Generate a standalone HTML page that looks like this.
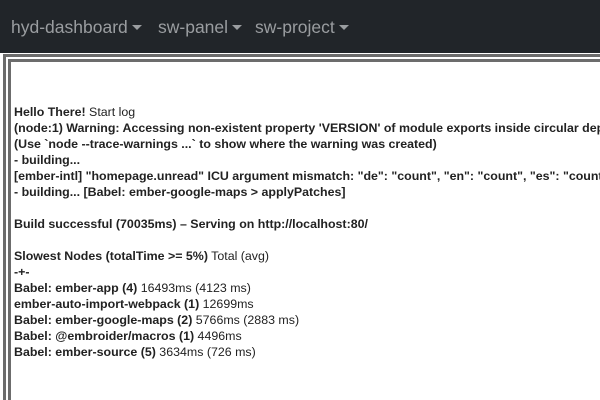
<!DOCTYPE html>
<html><head><style>
html,body{margin:0;padding:0;width:600px;height:400px;overflow:hidden;background:#fff;font-family:"Liberation Sans",sans-serif;position:relative;}
.nav{position:absolute;left:0;top:0;width:600px;height:53px;background:#212529;}
.nav span{position:absolute;top:17px;font-size:17.5px;color:#9a9da0;white-space:nowrap;}
.caret{display:inline-block;width:0;height:0;border-left:5px solid transparent;border-right:5px solid transparent;border-top:5px solid #9a9da0;vertical-align:3px;margin-left:4px;}
.box{position:absolute;left:3px;top:54px;width:597px;height:346px;border:8px double #6c6c6c;border-right:none;border-bottom:none;box-sizing:border-box;}
.clip{position:absolute;left:0;top:0;width:600px;height:400px;overflow:hidden;}
.log{position:absolute;left:14px;top:104px;font-size:12.4px;line-height:16px;color:#222;white-space:nowrap;}
b{font-weight:bold;}
</style></head><body>
<div class="nav">
<span style="left:11px">hyd-dashboard<i class="caret"></i></span>
<span style="left:158px">sw-panel<i class="caret"></i></span>
<span style="left:255px">sw-project<i class="caret"></i></span>
</div>
<div class="box"></div>
<div class="clip"><div class="log">
<b>Hello There!</b> Start log<br>
<b>(node:1) Warning: Accessing non-existent property 'VERSION' of module exports inside circular dep</b><br>
<b>(Use `node --trace-warnings ...` to show where the warning was created)</b><br>
<b>- building...</b><br>
<b>[ember-intl] "homepage.unread" ICU argument mismatch: "de": "count", "en": "count", "es": "count"</b><br>
<b>- building... [Babel: ember-google-maps &gt; applyPatches]</b><br>
<br>
<b>Build successful (70035ms) – Serving on http://localhost:80/</b><br>
<br>
<b>Slowest Nodes (totalTime &gt;= 5%)</b> Total (avg)<br>
<b>-+-</b><br>
<b>Babel: ember-app (4)</b> 16493ms (4123 ms)<br>
<b>ember-auto-import-webpack (1)</b> 12699ms<br>
<b>Babel: ember-google-maps (2)</b> 5766ms (2883 ms)<br>
<b>Babel: @embroider/macros (1)</b> 4496ms<br>
<b>Babel: ember-source (5)</b> 3634ms (726 ms)
</div></div>
</body></html>
